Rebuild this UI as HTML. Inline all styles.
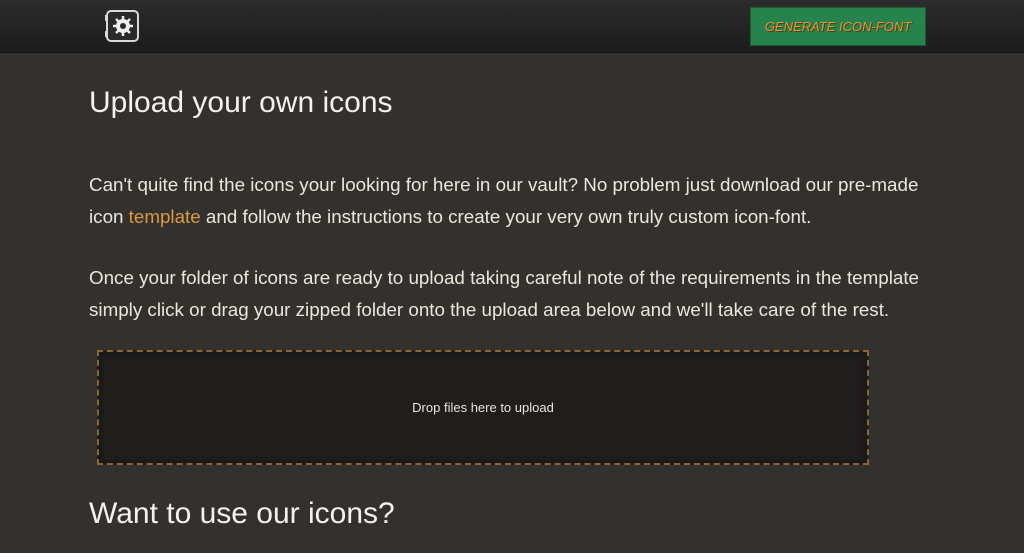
<!DOCTYPE html>
<html><head><meta charset="utf-8"><style>
body{margin:0;width:1024px;height:553px;overflow:hidden;background:#33312e;font-family:"Liberation Sans",sans-serif;color:#e8e4dc}
.hdr{position:absolute;left:0;top:0;width:1024px;height:52px;background:linear-gradient(#2c2c2c,#1c1c1c);border-bottom:1px solid #151515}
.btn{position:absolute;left:750px;top:7px;width:176px;height:39px;background:#27834d;border:1px solid #1b5a34;box-sizing:border-box;color:#d79a3c;font-style:italic;font-size:13px;line-height:37px;text-align:center;text-shadow:1px 1px 0 #5a3a10}
h1{position:absolute;left:89px;margin:0;font-weight:normal;font-size:30px;color:#f4f2ee}
p{position:absolute;left:89px;margin:0;font-size:18.8px;line-height:32px;white-space:nowrap;color:#ece6da}
a{color:#d89a42;text-decoration:none}
.drop{position:absolute;left:97px;top:350px;width:772px;height:115px;box-sizing:border-box;border:2px dashed #8a6630;background:#1f1e1d;box-shadow:inset 0 0 6px #111}
.drop span{position:absolute;left:0;right:0;top:48px;text-align:center;font-size:13px;color:#e8e4dc}
</style></head><body>
<div class="hdr">
<svg style="position:absolute;left:104px;top:9px" width="36" height="34" viewBox="0 0 36 34"><rect x="3" y="2" width="31" height="30" rx="4" fill="#2a2a2a" stroke="#d8d8d8" stroke-width="2"/><rect x="1" y="6" width="3" height="6" fill="#d8d8d8"/><rect x="1" y="22" width="3" height="6" fill="#d8d8d8"/><g fill="#eee"><circle cx="19" cy="17" r="7"/><g stroke="#eee" stroke-width="2.5"><line x1="19" y1="7" x2="19" y2="27"/><line x1="9" y1="17" x2="29" y2="17"/><line x1="12" y1="10" x2="26" y2="24"/><line x1="26" y1="10" x2="12" y2="24"/></g></g><circle cx="19" cy="17" r="3" fill="#2a2a2a"/></svg>
<div class="btn">GENERATE ICON-FONT</div>
</div>
<h1 style="top:86px">Upload your own icons</h1>
<p style="top:169px">Can't quite find the icons your looking for here in our vault? No problem just download our pre-made<br>icon <a>template</a> and follow the instructions to create your very own truly custom icon-font.</p>
<p style="top:262px">Once your folder of icons are ready to upload taking careful note of the requirements in the template<br>simply click or drag your zipped folder onto the upload area below and we'll take care of the rest.</p>
<div class="drop"><span>Drop files here to upload</span></div>
<h1 style="top:497px">Want to use our icons?</h1>
</body></html>
